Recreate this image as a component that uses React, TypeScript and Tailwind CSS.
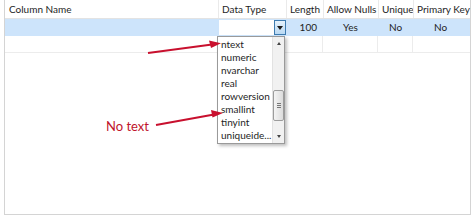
import React from "react";

const cols = [
  { name: "Column Name", w: 213 },
  { name: "Data Type", w: 68 },
  { name: "Length", w: 37 },
  { name: "Allow Nulls", w: 55 },
  { name: "Unique", w: 35 },
  { name: "Primary Key", w: 55 },
];

const items = ["ntext", "numeric", "nvarchar", "real", "rowversion", "smallint", "tinyint", "uniqueide..."];

export default function App() {
  return (
    <div
      className="relative w-[474px] h-[218px] bg-white overflow-hidden text-[10px] text-[#1e1e1e]"
      style={{ fontFamily: 'Lato, "Open Sans", sans-serif' }}
    >
      <div className="ml-[4px] mr-[3px] h-[215px] border-l border-r border-b border-[#d4d4d4] flex flex-col">
        {/* header */}
        <div className="flex h-[19px] border-b border-[#e3e3e3]">
          {cols.map((c, i) => (
            <div
              key={c.name}
              style={{ width: c.w }}
              className={`flex items-center h-full px-[3px] whitespace-nowrap ${i > 0 ? "border-l border-[#eaeaea]" : "pl-[4px]"}`}
            >
              {c.name}
            </div>
          ))}
        </div>
        {/* selected row */}
        <div className="flex h-[17px] bg-[#cde4fb]">
          <div className="w-[213px]" />
          <div className="w-[68px] flex items-center pl-[1px] py-[1px]">
            <div className="flex-1 h-full bg-white" />
            <div className="w-[12px] h-full border border-[#3d7bb0] bg-gradient-to-b from-[#e6f2fc] to-[#b9d9f3] flex items-center justify-center">
              <div className="w-0 h-0 border-l-[3px] border-r-[3px] border-t-[4px] border-l-transparent border-r-transparent border-t-[#1b1b1b]" />
            </div>
          </div>
          <div className="w-[37px] flex items-center justify-end pr-[6px]">100</div>
          <div className="w-[55px] flex items-center justify-center">Yes</div>
          <div className="w-[35px] flex items-center justify-center">No</div>
          <div className="w-[55px] flex items-center justify-center">No</div>
        </div>
        {/* empty row */}
        <div className="flex h-[17px] border-b border-[#ececec]">
          <div className="w-[213px]" />
          <div className="w-[68px]" />
          <div className="w-[37px] border-r border-[#ececec]" />
          <div className="w-[55px] border-r border-[#ececec]" />
          <div className="w-[35px] border-r border-[#ececec]" />
          <div className="w-[55px]" />
        </div>
      </div>

      {/* dropdown list */}
      <div className="absolute left-[217px] top-[36px] w-[68px] h-[108px] bg-white border border-[#9a9a9a] shadow-[2px_2px_3px_rgba(0,0,0,0.25)] flex">
        <div className="flex-1 flex flex-col pt-[1px] overflow-hidden">
          {items.map((it) => (
            <div key={it} className="h-[13px] leading-[13px] pl-[3px] whitespace-nowrap">
              {it}
            </div>
          ))}
        </div>
        <div className="w-[12px] h-full bg-[#f1f1f1] border-l border-[#e2e2e2] flex flex-col items-center">
          <div className="h-[13px] flex items-center justify-center">
            <div className="w-0 h-0 border-l-[2.5px] border-r-[2.5px] border-b-[3px] border-l-transparent border-r-transparent border-b-[#444]" />
          </div>
          <div className="h-[40px]" />
          <div className="w-[11px] h-[31px] border border-[#9c9c9c] rounded-[2px] bg-gradient-to-r from-[#f4f4f4] to-[#dcdcdc] flex flex-col items-center justify-center gap-[1px]">
            <div className="w-[4px] h-px bg-[#777]" />
            <div className="w-[4px] h-px bg-[#777]" />
            <div className="w-[4px] h-px bg-[#777]" />
          </div>
          <div className="flex-1" />
          <div className="h-[13px] flex items-center justify-center">
            <div className="w-0 h-0 border-l-[2.5px] border-r-[2.5px] border-t-[3px] border-l-transparent border-r-transparent border-t-[#444]" />
          </div>
        </div>
      </div>

      {/* annotations */}
      <svg className="absolute left-0 top-0" width="474" height="218" viewBox="0 0 474 218">
        <line x1="148" y1="53" x2="212" y2="44.5" stroke="#c8102e" strokeWidth="2" />
        <polygon points="221,43.3 209,40.5 211,48" fill="#c8102e" />
        <line x1="156" y1="125" x2="214" y2="114.5" stroke="#c8102e" strokeWidth="2" />
        <polygon points="223,113 211,110 212.5,117.5" fill="#c8102e" />
      </svg>
      <div className="absolute left-[106px] top-[117px] text-[13px] leading-[18px] text-[#c0142b]">
        No text
      </div>
    </div>
  );
}
